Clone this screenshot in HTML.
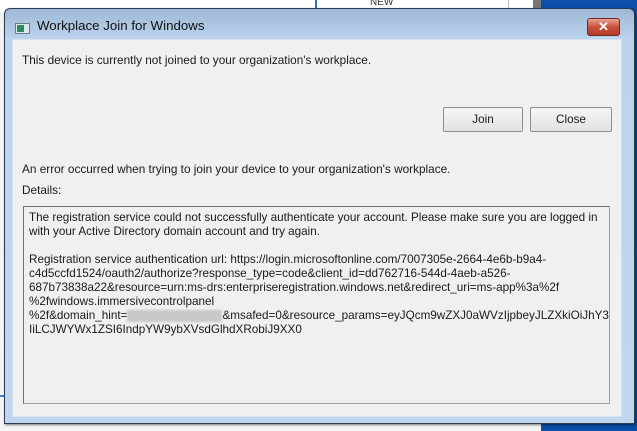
<!DOCTYPE html>
<html><head><meta charset="utf-8"><style>
*{margin:0;padding:0;box-sizing:border-box}
body{width:637px;height:431px;overflow:hidden;background:#f4f4f4;position:relative;font-family:"Liberation Sans",sans-serif;color:#1a1a1a}
.abs{position:absolute}
.t{position:absolute;font-size:11.7px;white-space:nowrap;line-height:14px}
</style></head><body>
<div class="abs" style="left:0;top:0;width:637px;height:12px;background:#fff"></div>
<div class="abs" style="left:315px;top:0;width:2px;height:10px;background:#3a6fc0"></div>
<div class="abs" style="left:370px;top:-3px;font-size:10px;color:#333">NEW</div>
<div class="abs" style="left:508px;top:0;width:1px;height:10px;background:#bbb"></div>
<div class="abs" style="left:533px;top:0;width:8px;height:10px;background:#777"></div>
<div class="abs" style="left:541px;top:0;width:96px;height:431px;background:#0b4fa8"></div>
<div class="abs" style="left:0;top:395px;width:6px;height:2px;background:#3a80c8"></div>
<!-- window -->
<div class="abs" style="left:4px;top:8px;width:631px;height:416px;background:linear-gradient(#9db8d6,#bcd3ec 30px,#c0d6ee);border:1px solid #2b3c52;border-radius:6px 6px 0 0;box-shadow:1px 1px 2px rgba(0,0,0,.5)"></div>
<div class="abs" style="left:15px;top:23px;width:15px;height:11px;background:#dfe6ee;border:1px solid #6a7a88"></div>
<div class="abs" style="left:17px;top:25px;width:7px;height:7px;background:#2d8a5a"></div>
<div class="abs" style="left:37px;top:18px;font-size:13.3px;color:#111">Workplace Join for Windows</div>
<div class="abs" style="left:587px;top:18px;width:33px;height:18px;border:1px solid #6b2a22;border-radius:3px;background:linear-gradient(#e8a293,#c8503c 50%,#b33a26);color:#fff;font-size:13px;font-weight:bold;text-align:center;line-height:16px">✕</div>
<!-- client -->
<div class="abs" style="left:12px;top:39px;width:610px;height:378px;background:#f0f0f0;border:1px solid #d8e2ee"></div>
<div class="t" style="left:22px;top:53px;font-size:11.8px">This device is currently not joined to your organization's workplace.</div>
<div class="abs" style="left:443px;top:107px;width:80px;height:25px;background:linear-gradient(#f6f6f6,#e2e2e2);border:1px solid #8e8e8e;border-radius:2px;font-size:11.7px;text-align:center;line-height:23px">Join</div>
<div class="abs" style="left:530px;top:107px;width:82px;height:25px;background:linear-gradient(#f6f6f6,#e2e2e2);border:1px solid #8e8e8e;border-radius:2px;font-size:11.7px;text-align:center;line-height:23px">Close</div>
<div class="t" style="left:22px;top:162px;font-size:11.8px">An error occurred when trying to join your device to your organization's workplace.</div>
<div class="t" style="left:22px;top:183px;font-size:11.8px">Details:</div>
<div class="abs" style="left:23px;top:206px;width:587px;height:198px;background:#f0f0f0;border:1px solid #a0a0a0;border-top-color:#707070;border-left-color:#707070"></div>
<div class="t" style="left:29px;top:211px">The registration service could not successfully authenticate your account. Please make sure you are logged in</div>
<div class="t" style="left:29px;top:225px">with your Active Directory domain account and try again.</div>
<div class="t" style="left:29px;top:253px">Registration service authentication url: https://login.microsoftonline.com/7007305e-2664-4e6b-b9a4-</div>
<div class="t" style="left:29px;top:267px">c4d5ccfd1524/oauth2/authorize?response_type=code&amp;client_id=dd762716-544d-4aeb-a526-</div>
<div class="t" style="left:29px;top:281px">687b73838a22&amp;resource=urn:ms-drs:enterpriseregistration.windows.net&amp;redirect_uri=ms-app%3a%2f</div>
<div class="t" style="left:29px;top:295px">%2fwindows.immersivecontrolpanel</div>
<div class="t" style="left:29px;top:309px">%2f&amp;domain_hint=<span style="display:inline-block;width:95px;height:12px;background:#c8c8c8;vertical-align:middle;filter:blur(1px)"></span>&amp;msafed=0&amp;resource_params=eyJQcm9wZXJ0aWVzIjpbeyJLZXkiOiJhY3</div>
<div class="t" style="left:29px;top:323px">IiLCJWYWx1ZSI6IndpYW9ybXVsdGlhdXRobiJ9XX0</div>
</body></html>
